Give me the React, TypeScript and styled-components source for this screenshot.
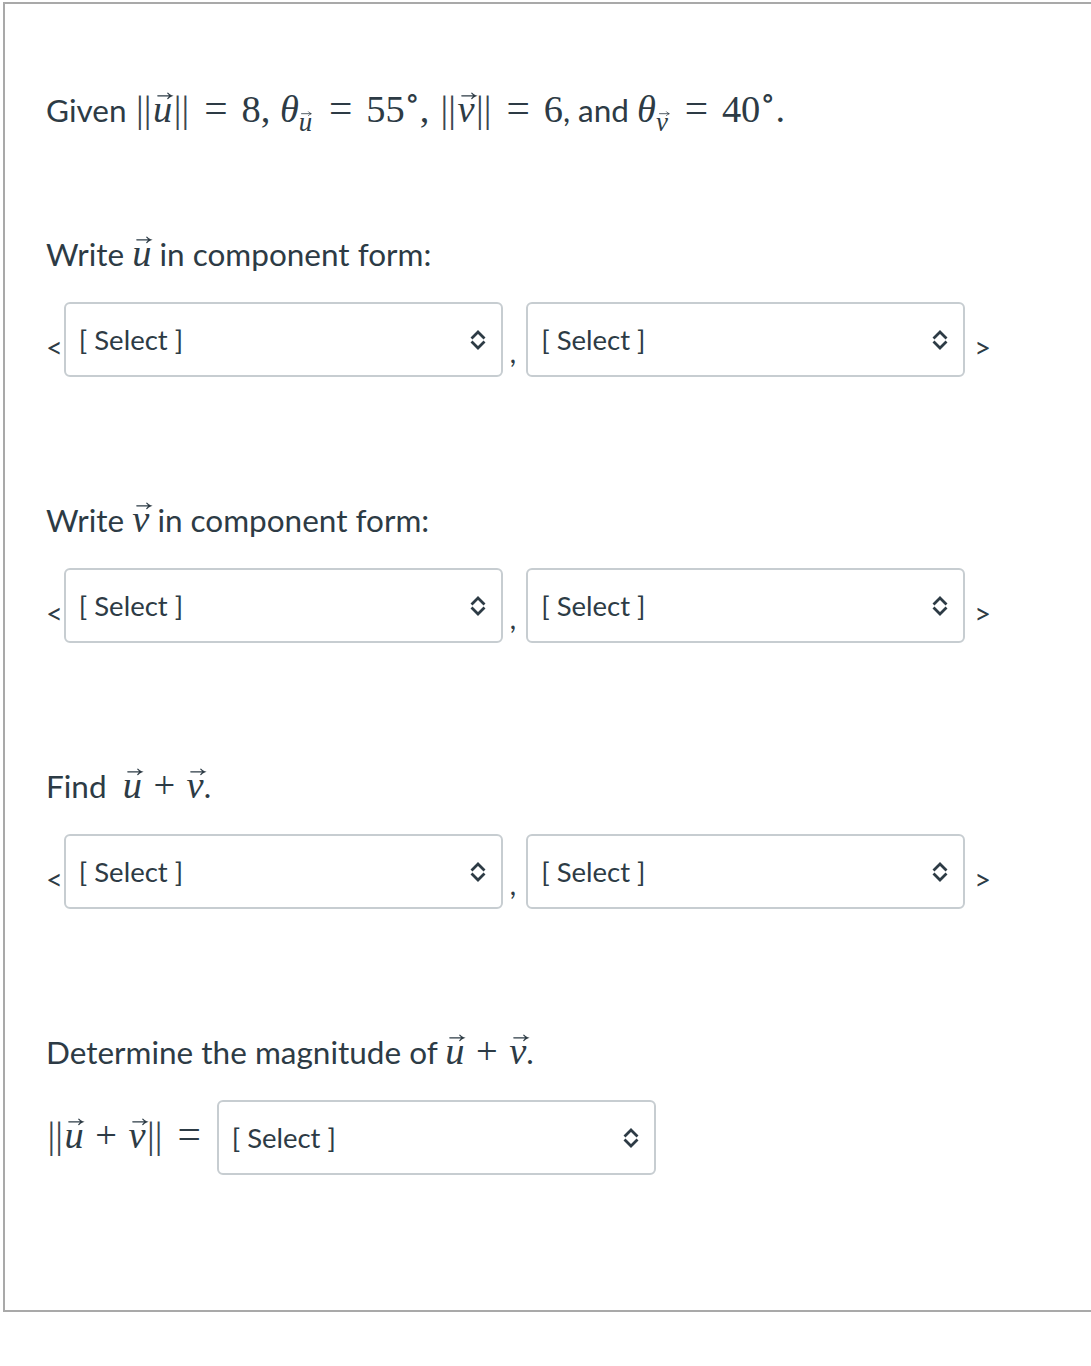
import React, { FC, ReactNode } from "react";
import styled, { createGlobalStyle } from "styled-components";

const GlobalStyle = createGlobalStyle`
  html, body {
    margin: 0;
    background: #fff;
  }

  body {
    font-family: Lato, "Noto Sans", sans-serif;
    color: #2d3b45;
  }
`;

const Page = styled.div`
  padding: 2px 0 0 3px;
  overflow: hidden;
`;

const Panel = styled.div`
  border: 2px solid #a9a9a9;
  border-right: none;
  padding: 0 0 135px 41px;
`;

const Intro = styled.p`
  margin: 79px 0 0;
  font-size: 31.5px;
  line-height: 45px;
`;

const Prompt = styled.p<{ $gap: number }>`
  margin: ${(p) => p.$gap}px 0 0;
  font-size: 31.5px;
  line-height: 45px;
`;

const Row = styled.div`
  display: flex;
  align-items: baseline;
  margin-top: 25px;
`;

// the brackets and comma sit low, near the bottom of the boxes
const Angle = styled.span<{ $side: "left" | "right" }>`
  align-self: flex-end;
  font-size: 29px;
  line-height: 1;
  margin: ${(p) => (p.$side === "left" ? "0 1px 16px 0" : "0 0 16px 9px")};
`;

const Comma = styled.span`
  align-self: flex-end;
  font-size: 28px;
  line-height: 1;
  margin: 0 10px 11px 7px;
`;

const SelectBox = styled.div`
  box-sizing: border-box;
  display: flex;
  align-items: center;
  justify-content: space-between;
  width: 439px;
  height: 75px;
  padding: 0 15px 0 13px;
  border: 2px solid #c7cdd1;
  border-radius: 6px;
  background: #fff;
  font-size: 27.5px;
  color: #2d3b45;
`;

const Chevron = styled.svg`
  width: 16px;
  height: 20px;
  flex-shrink: 0;
`;

const Math = styled.span`
  font-family: "Liberation Serif", "DejaVu Serif", serif;
  font-size: 1.22em;
  line-height: 1;
`;

const I = styled.i`
  font-style: italic;
`;

const Rel = styled.span`
  font-size: 1.08em;
  margin: 0 0.33em;
`;

const Bin = styled.span`
  margin: 0 0.3em;
`;

const Bars = styled.span`
  color: #3a4750;
  margin: 0 0.04em;
`;

const Sub = styled.sub`
  font-size: 0.7em;
  vertical-align: -0.35em;
  line-height: 1;
  margin-right: 0.12em;
`;

const Deg = styled.sup`
  font-size: 0.8em;
  vertical-align: 0.45em;
  line-height: 1;
`;

const VecBox = styled.span`
  position: relative;
  display: inline-block;
  line-height: 1;
`;

const Arrow = styled.svg`
  position: absolute;
  left: 0.1em;
  top: 0.06em;
  width: 0.4em;
  height: 0.18em;
  overflow: visible;
`;

const Vec: FC<{ children: ReactNode }> = ({ children }) => (
  <VecBox>
    <I>{children}</I>
    <Arrow viewBox="0 0 20 8">
      <path
        d="M1 4.5 H18.5 M14 1 Q16 3.6 19 4.5 Q16 5.4 14 8"
        fill="none"
        stroke="#2d3b45"
        strokeWidth="1.5"
        strokeLinecap="round"
      />
    </Arrow>
  </VecBox>
);

const Select: FC = () => (
  <SelectBox>
    <span>[ Select ]</span>
    <Chevron viewBox="0 0 16 20">
      <path
        d="M1.5 8.5 L8 2 L14.5 8.5 M1.5 11.5 L8 18 L14.5 11.5"
        fill="none"
        stroke="#2d3b45"
        strokeWidth="2.8"
      />
    </Chevron>
  </SelectBox>
);

const PairRow: FC = () => (
  <Row>
    <Angle $side="left">&lt;</Angle>
    <Select />
    <Comma>,</Comma>
    <Select />
    <Angle $side="right">&gt;</Angle>
  </Row>
);

const SumLabel = styled.span`
  font-size: 31.5px;
  margin-right: 2px;
`;

const Norm: FC<{ children: ReactNode }> = ({ children }) => (
  <>
    <Bars>||</Bars>
    {children}
    <Bars>||</Bars>
  </>
);

const UplusV: FC = () => (
  <>
    <Vec>u</Vec>
    <Bin>+</Bin>
    <Vec>v</Vec>
  </>
);

const App: FC = () => (
  <Page>
    <GlobalStyle />
    <Panel>
      <Intro>
        Given{" "}
        <Math>
          <Norm>
            <Vec>u</Vec>
          </Norm>
          <Rel>=</Rel>8, <I>θ</I>
          <Sub>
            <Vec>u</Vec>
          </Sub>
          <Rel>=</Rel>55<Deg>∘</Deg>, <Norm>
            <Vec>v</Vec>
          </Norm>
          <Rel>=</Rel>6
        </Math>
        , and{" "}
        <Math>
          <I>θ</I>
          <Sub>
            <Vec>v</Vec>
          </Sub>
          <Rel>=</Rel>40<Deg>∘</Deg>.
        </Math>
      </Intro>

      <Prompt $gap={96}>
        Write{" "}
        <Math>
          <Vec>u</Vec>
        </Math>{" "}
        in component form:
      </Prompt>
      <PairRow />

      <Prompt $gap={121}>
        Write{" "}
        <Math>
          <Vec>v</Vec>
        </Math>{" "}
        in component form:
      </Prompt>
      <PairRow />

      <Prompt $gap={121}>
        Find{"  "}&nbsp;
        <Math>
          <UplusV />
        </Math>
        .
      </Prompt>
      <PairRow />

      <Prompt $gap={121}>
        Determine the magnitude of{" "}
        <Math>
          <UplusV />
        </Math>
        .
      </Prompt>
      <Row>
        <SumLabel>
          <Math>
            <Norm>
              <UplusV />
            </Norm>
            <Rel>=</Rel>
          </Math>
        </SumLabel>
        <Select />
      </Row>
    </Panel>
  </Page>
);

export default App;
